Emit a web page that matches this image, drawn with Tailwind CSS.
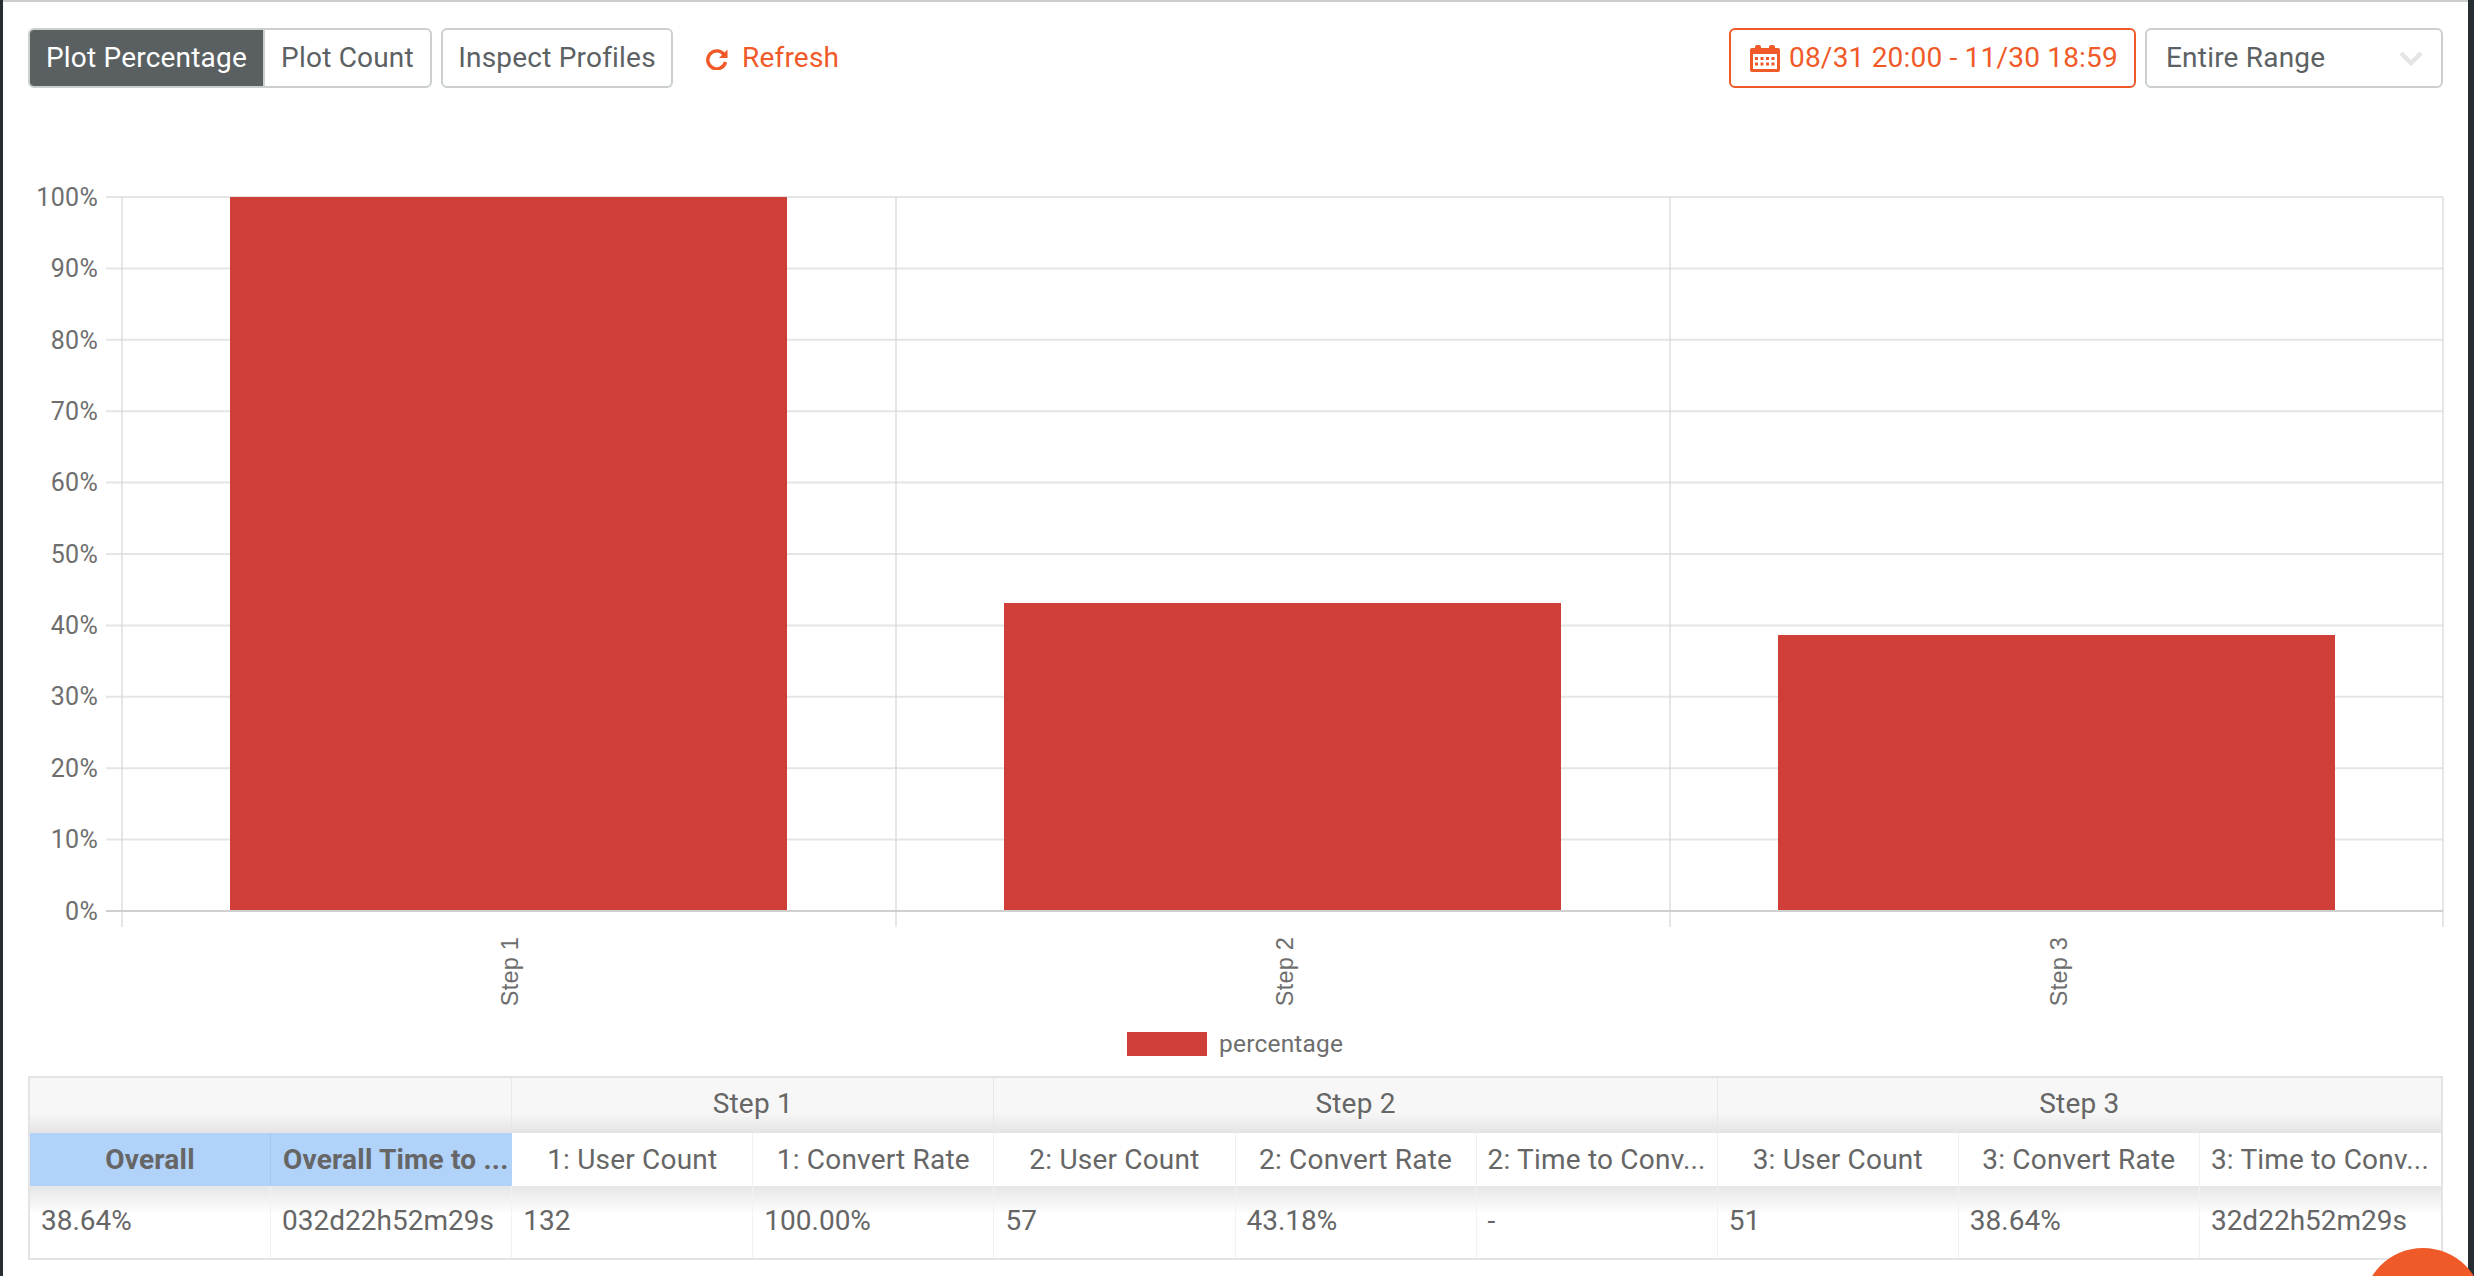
<!DOCTYPE html>
<html>
<head>
<meta charset="utf-8">
<title>Funnel</title>
<script src="https://cdn.jsdelivr.net/npm/@tailwindcss/browser@4"></script>
</head>
<body class="bg-white">
<div class="relative flex h-[1276px] w-[2474px] overflow-hidden font-['Roboto',sans-serif] text-[28px] tracking-[0.2px] text-[#5c6163]">
  <div class="w-[3px] shrink-0 bg-[#272e33]"></div>

  <main class="flex w-[2465px] flex-col border-t-2 border-[#c9cecd] bg-white">
    <!-- toolbar -->
    <div class="mt-[26px] flex h-[60px] pl-[25px] pr-[25px]">
      <div class="flex w-[404px] overflow-hidden rounded-[6px] border-2 border-[#cbd0cf]">
        <button class="w-[233px] bg-[#5a5f61] text-center text-white">Plot Percentage</button>
        <button class="flex-1 border-l-2 border-[#cbd0cf] text-center">Plot Count</button>
      </div>
      <button class="ml-[9px] w-[232px] rounded-[6px] border-2 border-[#cbd0cf] text-center">Inspect Profiles</button>
      <div class="ml-[33px] flex items-center gap-[14px] text-[#f05a28]">
        <svg class="h-[24px] w-[22px]" viewBox="0 0 22 24">
          <path d="M18 8.5A9 9 0 1 0 19.5 16" fill="none" stroke="#f05a28" stroke-width="3.4"/>
          <path d="M21.5 3.5V12h-8.5z" fill="#f05a28"/>
        </svg>
        <span>Refresh</span>
      </div>
      <div class="ml-auto flex gap-[9px]">
        <div class="flex w-[407px] items-center gap-[9px] rounded-[6px] border-2 border-[#f05a28] pl-[19px] text-[#f05a28]">
          <svg class="h-[27px] w-[30px] shrink-0" viewBox="0 0 30 27">
            <rect x="0" y="3" width="30" height="24" rx="2" fill="#f05a28"/>
            <rect x="5" y="0" width="6" height="6" rx="2" fill="#f05a28"/>
            <rect x="19" y="0" width="6" height="6" rx="2" fill="#f05a28"/>
            <rect x="3" y="9" width="24" height="15" fill="#fff"/>
            <g fill="#f05a28">
              <rect x="5" y="12" width="3" height="3"/><rect x="10.5" y="12" width="3" height="3"/><rect x="16" y="12" width="3" height="3"/><rect x="21.5" y="12" width="3" height="3"/>
              <rect x="5" y="17.5" width="3" height="3"/><rect x="10.5" y="17.5" width="3" height="3"/><rect x="16" y="17.5" width="3" height="3"/><rect x="21.5" y="17.5" width="3" height="3"/>
            </g>
          </svg>
          <span>08/31 20:00 - 11/30 18:59</span>
        </div>
        <div class="flex w-[298px] items-center justify-between rounded-[6px] border-2 border-[#cbd0cf] pl-[19px] pr-[18px]">
          <span>Entire Range</span>
          <svg class="h-[16px] w-[24px]" viewBox="0 0 24 16"><path d="M2 3l10 10L22 3" fill="none" stroke="#e4e4e4" stroke-width="4.5"/></svg>
        </div>
      </div>
    </div>

    <!-- chart, viewBox follows page coordinates -->
    <svg class="block h-[988px] w-[2465px] shrink-0" viewBox="3 88 2465 988" font-family="Roboto, sans-serif" font-size="25" fill="#6e6e6e">
      <g stroke="#e4e5e5" stroke-width="2">
        <line x1="106" x2="2443" y1="197" y2="197"/>
        <line x1="106" x2="2443" y1="268.4" y2="268.4"/>
        <line x1="106" x2="2443" y1="339.8" y2="339.8"/>
        <line x1="106" x2="2443" y1="411.2" y2="411.2"/>
        <line x1="106" x2="2443" y1="482.6" y2="482.6"/>
        <line x1="106" x2="2443" y1="554" y2="554"/>
        <line x1="106" x2="2443" y1="625.4" y2="625.4"/>
        <line x1="106" x2="2443" y1="696.8" y2="696.8"/>
        <line x1="106" x2="2443" y1="768.2" y2="768.2"/>
        <line x1="106" x2="2443" y1="839.6" y2="839.6"/>
      </g>
      <g stroke="#d6d6d6" stroke-width="1.2">
        <line x1="122" x2="122" y1="197" y2="927"/>
        <line x1="896" x2="896" y1="197" y2="927"/>
        <line x1="1670" x2="1670" y1="197" y2="927"/>
        <line x1="2443" x2="2443" y1="197" y2="927"/>
      </g>
      <g fill="#cf3f37">
        <rect x="230" y="197" width="557" height="714"/>
        <rect x="1004" y="603" width="557" height="308"/>
        <rect x="1778" y="635" width="557" height="276"/>
      </g>
      <line x1="106" x2="2443" y1="911" y2="911" stroke="#cfcfcf" stroke-width="2"/>
      <g text-anchor="end" letter-spacing="0.3">
        <text x="98" y="205.5">100%</text>
        <text x="98" y="276.5">90%</text>
        <text x="98" y="348.5">80%</text>
        <text x="98" y="419.5">70%</text>
        <text x="98" y="490.5">60%</text>
        <text x="98" y="562.5">50%</text>
        <text x="98" y="633.5">40%</text>
        <text x="98" y="704.5">30%</text>
        <text x="98" y="776.5">20%</text>
        <text x="98" y="847.5">10%</text>
        <text x="98" y="919.5">0%</text>
      </g>
      <g font-family="'Liberation Sans', sans-serif" font-size="23.5" text-anchor="end">
        <text transform="translate(518 937) rotate(-90)">Step 1</text>
        <text transform="translate(1293 937) rotate(-90)">Step 2</text>
        <text transform="translate(2067 937) rotate(-90)">Step 3</text>
      </g>
      <rect x="1127" y="1032" width="80" height="24" fill="#cf3f37"/>
      <text x="1219" y="1052" font-size="24.5">percentage</text>
    </svg>

    <!-- table -->
    <div class="ml-[25px] h-[184px] w-[2415px] border-2 border-[#e4e4e4] text-[#666]">
      <div class="grid h-[55px] grid-cols-10 border-b-2 border-[#e4e4e4] bg-linear-to-b from-[#f7f7f7] from-65% to-[#e6e6e6] text-center leading-[51px]">
        <div class="col-span-2 border-r border-[#e8e8e8]"></div>
        <div class="col-span-2 border-r border-[#e8e8e8]">Step 1</div>
        <div class="col-span-3 border-r border-[#e8e8e8]">Step 2</div>
        <div class="col-span-3">Step 3</div>
      </div>
      <div class="grid h-[53px] grid-cols-10 text-center leading-[53px] whitespace-nowrap">
        <div class="border-r border-[#a5c8f0] bg-[#b1d2f9] font-bold">Overall</div>
        <div class="bg-[#b1d2f9] pl-[12px] text-left font-bold">Overall Time to ...</div>
        <div class="border-r border-[#f0f0f0]">1: User Count</div>
        <div class="border-r border-[#f0f0f0]">1: Convert Rate</div>
        <div class="border-r border-[#f0f0f0]">2: User Count</div>
        <div class="border-r border-[#f0f0f0]">2: Convert Rate</div>
        <div class="border-r border-[#f0f0f0] pl-[11px] text-left">2: Time to Conv...</div>
        <div class="border-r border-[#f0f0f0]">3: User Count</div>
        <div class="border-r border-[#f0f0f0]">3: Convert Rate</div>
        <div class="pl-[11px] text-left">3: Time to Conv...</div>
      </div>
      <div class="grid h-[72px] grid-cols-10 bg-linear-to-b from-[#e6e6e6] to-white to-40% leading-[70px] tracking-normal whitespace-nowrap">
        <div class="border-r border-[#f2f2f2] pl-[11px]">38.64%</div>
        <div class="border-r border-[#f2f2f2] pl-[11px]">032d22h52m29s</div>
        <div class="border-r border-[#f2f2f2] pl-[11px]">132</div>
        <div class="border-r border-[#f2f2f2] pl-[11px]">100.00%</div>
        <div class="border-r border-[#f2f2f2] pl-[11px]">57</div>
        <div class="border-r border-[#f2f2f2] pl-[11px]">43.18%</div>
        <div class="border-r border-[#f2f2f2] pl-[11px]">-</div>
        <div class="border-r border-[#f2f2f2] pl-[11px]">51</div>
        <div class="border-r border-[#f2f2f2] pl-[11px]">38.64%</div>
        <div class="pl-[11px]">32d22h52m29s</div>
      </div>
    </div>
  </main>

  <div class="flex-1 bg-[#272e33]"></div>
  <!-- floating help button, mostly cut off by the window -->
  <div class="absolute left-[2363px] top-[1248px] h-[120px] w-[120px] rounded-full bg-[#f05a28]"></div>
</div>
</body>
</html>
